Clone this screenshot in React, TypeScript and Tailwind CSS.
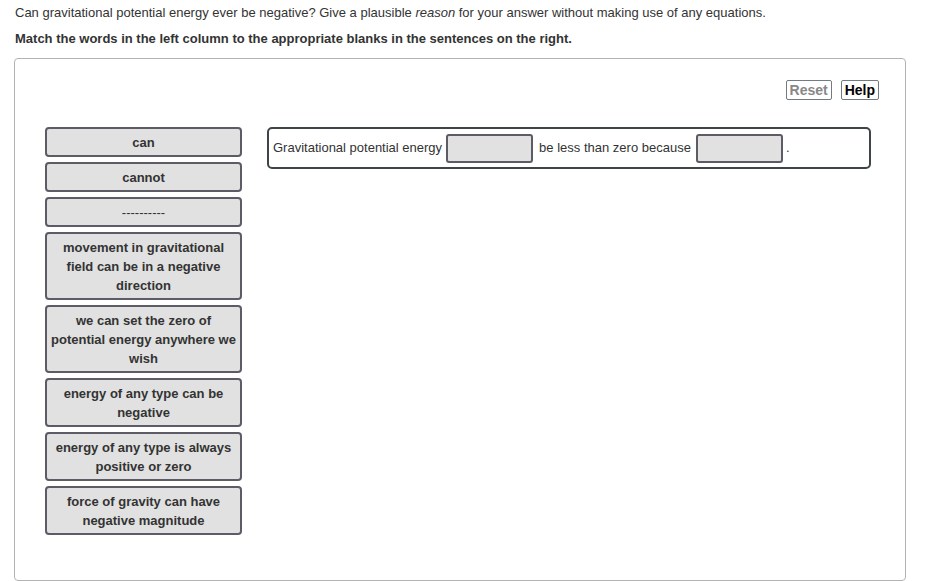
import React from "react";

const words = [
  "can",
  "cannot",
  "----------",
  "movement in gravitational field can be in a negative direction",
  "we can set the zero of potential energy anywhere we wish",
  "energy of any type can be negative",
  "energy of any type is always positive or zero",
  "force of gravity can have negative magnitude",
];

export default function App() {
  return (
    <div className="w-[925px] h-[581px] overflow-hidden bg-white text-[#333] font-['Liberation_Sans',Arial,sans-serif]">
      <div className="pl-[15px] pt-[5px]">
        <p className="text-[13px] leading-[16px]">
          Can gravitational potential energy ever be negative? Give a plausible <i>reason</i> for your answer without
          making use of any equations.
        </p>
        <p className="mt-[10px] text-[13px] leading-[16px] font-bold">
          Match the words in the left column to the appropriate blanks in the sentences on the right.
        </p>
      </div>

      <div className="ml-[14px] mt-[11px] w-[892px] h-[523px] border border-[#b3b3b3] rounded-[4px]">
        <div className="flex justify-end gap-[9px] pr-[26px] pt-[21px]">
          <button className="h-[20px] px-[3px] border border-[#6f7c82] rounded-[2px] text-[14px] leading-[18px] font-bold text-[#888]">
            Reset
          </button>
          <button className="h-[20px] px-[3px] border border-[#6f7c82] rounded-[2px] text-[14px] leading-[18px] font-bold text-black">
            Help
          </button>
        </div>

        <div className="flex items-start pl-[30px] pt-[27px]">
          <div className="w-[197px] flex flex-col gap-[5px]">
            {words.map((w, i) => (
              <div
                key={i}
                className={`border-2 border-[#5c5b66] rounded-[4px] bg-[#e1e1e1] px-[4px] py-[3.5px] text-center text-[13px] leading-[19px] text-[#333] ${
                  w.startsWith("---") ? "font-normal" : "font-bold"
                }`}
              >
                {w}
              </div>
            ))}
          </div>

          <div className="ml-[25px] w-[604px] h-[42px] border-2 border-[#3f4446] rounded-[5px] flex items-center pl-[4px] text-[13px]">
            <span>Gravitational potential energy</span>
            <span className="ml-[4px] w-[87px] h-[29px] border-2 border-[#5c5b66] rounded-[3px] bg-[#e1e1e1]" />
            <span className="ml-[6px]">be less than zero because</span>
            <span className="ml-[5px] w-[87px] h-[29px] border-2 border-[#5c5b66] rounded-[3px] bg-[#e1e1e1]" />
            <span className="ml-[3px]">.</span>
          </div>
        </div>
      </div>
    </div>
  );
}
